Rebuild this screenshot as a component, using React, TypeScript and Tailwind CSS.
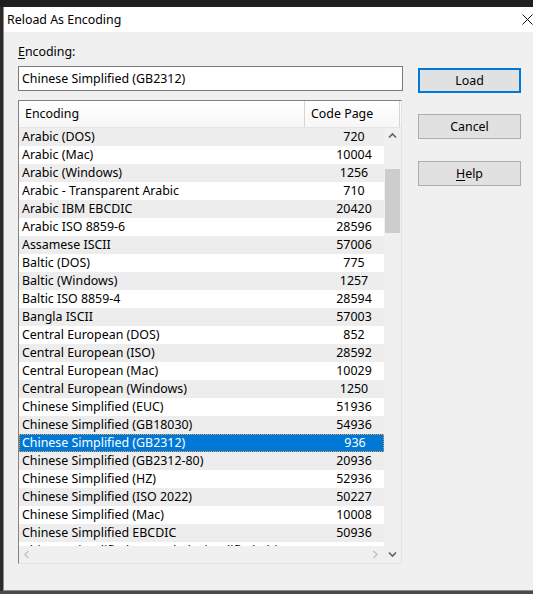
import React from "react";

type Row = [name: string, page: string];

const rows: Row[] = [
  ["Arabic (DOS)", "720"],
  ["Arabic (Mac)", "10004"],
  ["Arabic (Windows)", "1256"],
  ["Arabic - Transparent Arabic", "710"],
  ["Arabic IBM EBCDIC", "20420"],
  ["Arabic ISO 8859-6", "28596"],
  ["Assamese ISCII", "57006"],
  ["Baltic (DOS)", "775"],
  ["Baltic (Windows)", "1257"],
  ["Baltic ISO 8859-4", "28594"],
  ["Bangla ISCII", "57003"],
  ["Central European (DOS)", "852"],
  ["Central European (ISO)", "28592"],
  ["Central European (Mac)", "10029"],
  ["Central European (Windows)", "1250"],
  ["Chinese Simplified (EUC)", "51936"],
  ["Chinese Simplified (GB18030)", "54936"],
  ["Chinese Simplified (GB2312)", "936"],
  ["Chinese Simplified (GB2312-80)", "20936"],
  ["Chinese Simplified (HZ)", "52936"],
  ["Chinese Simplified (ISO 2022)", "50227"],
  ["Chinese Simplified (Mac)", "10008"],
  ["Chinese Simplified EBCDIC", "50936"],
  ["Chinese Simplified (Extended) Simplified Chinese", ""],
];

const SELECTED = 17;

function Chevron({ dir, className }: { dir: "up" | "down" | "left" | "right"; className: string }) {
  const d = {
    up: "M1 5.5 L4.5 2 L8 5.5",
    down: "M1 2.5 L4.5 6 L8 2.5",
    left: "M5.5 1 L2 4.5 L5.5 8",
    right: "M2.5 1 L6 4.5 L2.5 8",
  }[dir];
  return (
    <svg width="9" height="9" viewBox="0 0 9 9" className={className}>
      <path d={d} fill="none" stroke="currentColor" strokeWidth="1.6" />
    </svg>
  );
}

function Button({ children, primary }: { children: React.ReactNode; primary?: boolean }) {
  return (
    <div
      className={
        "flex h-[25px] w-[103px] items-center justify-center bg-[#e1e1e1] " +
        (primary ? "border-2 border-[#0078d7]" : "border border-[#adadad]")
      }
    >
      {children}
    </div>
  );
}

export default function App() {
  return (
    <div className="h-[594px] w-[533px] overflow-hidden bg-[#4a4a4a] font-['Noto_Sans',sans-serif] text-[12.4px] leading-[16px] text-black">
      <div className="h-[7px] bg-[#1f1f1f]" />
      <div className="flex">
        <div className="h-[584px] w-[3px] shrink-0 bg-[#2b2b2b]" />
        <div className="flex h-[584px] w-[540px] shrink-0 flex-col border-b border-l border-[#8a8a8a] bg-[#f0f0f0]">
          {/* title bar */}
          <div className="flex h-[25px] items-center justify-between bg-white pl-[3px]">
            <span>Reload As Encoding</span>
            <svg width="11" height="11" viewBox="0 0 11 11" className="mr-[10px]">
              <path d="M0.5 0.5 L10.5 10.5 M10.5 0.5 L0.5 10.5" stroke="#111" strokeWidth="1" />
            </svg>
          </div>

          <div className="flex gap-[16px] pl-[14px]">
            {/* left column */}
            <div className="flex w-[384px] flex-col">
              <div className="mt-[12px] h-[16px]">
                <span className="underline underline-offset-2">E</span>ncoding:
              </div>
              <div className="mt-[6px] flex h-[25px] w-[385px] items-center border border-[#7a7a7a] bg-white pl-[3px]">
                Chinese Simplified (GB2312)
              </div>

              {/* list */}
              <div className="mt-[9px] flex h-[464px] w-[384px] flex-col border-t border-l border-[#828282] border-r border-b border-r-[#e3e3e3] border-b-[#e3e3e3]">
                <div className="flex h-[27px] border-b border-[#e5e5e5] bg-gradient-to-b from-white to-[#f7f7f7]">
                  <div className="flex w-[286px] items-center border-r border-[#d5d5d5] pl-[6px]">Encoding</div>
                  <div className="flex w-[95px] items-center border-r border-[#d5d5d5] pl-[6px]">Code Page</div>
                </div>
                <div className="flex flex-1 overflow-hidden">
                  <div className="flex w-[365px] flex-col">
                    <div className="h-[419px] overflow-hidden bg-white">
                      {rows.map(([name, page], i) => (
                        <div
                          key={name}
                          className={
                            "flex h-[18px] items-center whitespace-nowrap " +
                            (i === SELECTED
                              ? "border border-dotted border-[#f39b3a] bg-[#0078d7] text-white"
                              : i % 2 === 0
                                ? "bg-[#ededed]"
                                : "bg-white")
                          }
                        >
                          <div className={"w-[286px] shrink-0 " + (i === SELECTED ? "pl-[2px]" : "pl-[3px]")}>{name}</div>
                          <div className="w-[98px] shrink-0 text-center">{page}</div>
                        </div>
                      ))}
                    </div>
                    <div className="flex h-[17px] items-center justify-between bg-[#f0f0f0] px-[4px]">
                      <Chevron dir="left" className="text-[#c6c6c6]" />
                      <Chevron dir="right" className="text-[#c6c6c6]" />
                    </div>
                  </div>
                  <div className="flex w-[17px] flex-col items-center bg-[#f0f0f0]">
                    <Chevron dir="up" className="mt-[4px] text-[#606060]" />
                    <div className="mt-[28px] h-[64px] w-[15px] bg-[#cdcdcd]" />
                    <div className="flex-1" />
                    <Chevron dir="down" className="mb-[4px] text-[#606060]" />
                  </div>
                </div>
              </div>
            </div>

            {/* buttons */}
            <div className="flex flex-col pt-[36px]">
              <Button primary>Load</Button>
              <div className="mt-[21px]">
                <Button>Cancel</Button>
              </div>
              <div className="mt-[22px]">
                <Button>
                  <span className="underline underline-offset-2">H</span>elp
                </Button>
              </div>
            </div>
          </div>
        </div>
      </div>
    </div>
  );
}
